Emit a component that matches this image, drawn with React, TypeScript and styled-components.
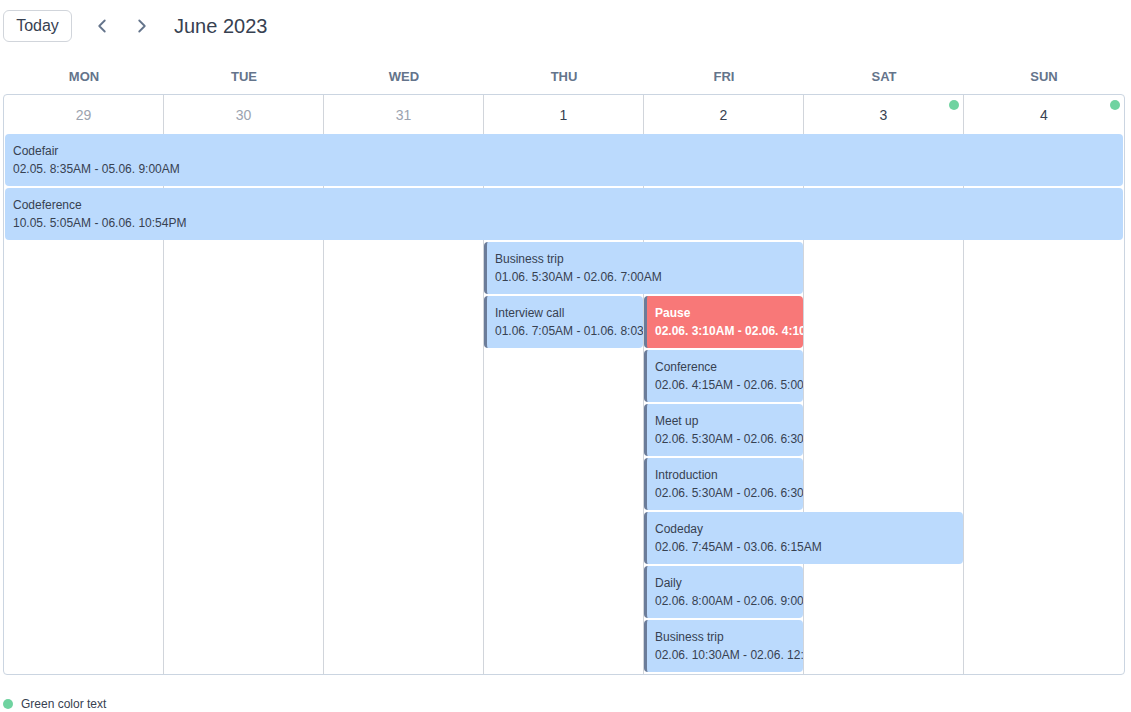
import React from 'react';
import styled, { createGlobalStyle } from 'styled-components';
import { ChevronLeft, ChevronRight } from 'lucide-react';

type Day = { label: string; num: number; muted?: boolean; dot?: boolean };

type CalEvent = {
  title: string;
  time: string;
  row: number;
  start: number;
  span: number;
  accent?: boolean;
  danger?: boolean;
};

const days: Day[] = [
  { label: 'MON', num: 29, muted: true },
  { label: 'TUE', num: 30, muted: true },
  { label: 'WED', num: 31, muted: true },
  { label: 'THU', num: 1 },
  { label: 'FRI', num: 2 },
  { label: 'SAT', num: 3, dot: true },
  { label: 'SUN', num: 4, dot: true },
];

const events: CalEvent[] = [
  { title: 'Codefair', time: '02.05. 8:35AM - 05.06. 9:00AM', row: 2, start: 1, span: 7 },
  { title: 'Codeference', time: '10.05. 5:05AM - 06.06. 10:54PM', row: 3, start: 1, span: 7 },
  { title: 'Business trip', time: '01.06. 5:30AM - 02.06. 7:00AM', row: 4, start: 4, span: 2, accent: true },
  { title: 'Interview call', time: '01.06. 7:05AM - 01.06. 8:03AM', row: 5, start: 4, span: 1, accent: true },
  { title: 'Pause', time: '02.06. 3:10AM - 02.06. 4:10AM', row: 5, start: 5, span: 1, accent: true, danger: true },
  { title: 'Conference', time: '02.06. 4:15AM - 02.06. 5:00AM', row: 6, start: 5, span: 1, accent: true },
  { title: 'Meet up', time: '02.06. 5:30AM - 02.06. 6:30AM', row: 7, start: 5, span: 1, accent: true },
  { title: 'Introduction', time: '02.06. 5:30AM - 02.06. 6:30AM', row: 8, start: 5, span: 1, accent: true },
  { title: 'Codeday', time: '02.06. 7:45AM - 03.06. 6:15AM', row: 9, start: 5, span: 2, accent: true },
  { title: 'Daily', time: '02.06. 8:00AM - 02.06. 9:00AM', row: 10, start: 5, span: 1, accent: true },
  { title: 'Business trip', time: '02.06. 10:30AM - 02.06. 12:00PM', row: 11, start: 5, span: 1, accent: true },
];

const App: React.FC = () => {
  return (
    <Page>
      <GlobalStyle />
      <Toolbar>
        <TodayButton>Today</TodayButton>
        <NavButton aria-label="Previous">
          <ChevronLeft size={22} strokeWidth={2} />
        </NavButton>
        <NavButton aria-label="Next">
          <ChevronRight size={22} strokeWidth={2} />
        </NavButton>
        <Title>June 2023</Title>
      </Toolbar>

      <WeekdayRow>
        {days.map((d) => (
          <Weekday key={d.label}>{d.label}</Weekday>
        ))}
      </WeekdayRow>

      <MonthGrid>
        {days.map((d, i) => (
          <DayColumn key={d.label} $col={i + 1} $last={i === days.length - 1}>
            <DayNumber $muted={d.muted}>{d.num}</DayNumber>
            {d.dot && <Dot />}
          </DayColumn>
        ))}
        {events.map((e, i) => (
          <EventBox
            key={i}
            $row={e.row}
            $start={e.start}
            $span={e.span}
            $accent={e.accent}
            $danger={e.danger}
          >
            <EventTitle>{e.title}</EventTitle>
            <EventTime>{e.time}</EventTime>
          </EventBox>
        ))}
      </MonthGrid>

      <Legend>
        <LegendDot />
        <LegendText>Green color text</LegendText>
      </Legend>
    </Page>
  );
};

const GlobalStyle = createGlobalStyle`
  body {
    margin: 0;
    background: #ffffff;
    font-family: "Liberation Sans", Arial, sans-serif;
    color: #374151;
  }
`;

const Page: any = styled.div`
  padding: 10px 7px 0 3px;
  width: 1122px;
`;

const Toolbar: any = styled.div`
  display: flex;
  align-items: center;
  height: 32px;
`;

const TodayButton: any = styled.button`
  height: 32px;
  width: 69px;
  padding: 0;
  border: 1px solid #d1d5db;
  border-radius: 6px;
  background: #ffffff;
  font-family: "Liberation Sans", Arial, sans-serif;
  font-size: 16px;
  color: #374151;
  margin-right: 15px;
`;

const NavButton: any = styled.button`
  display: flex;
  align-items: center;
  justify-content: center;
  width: 30px;
  height: 30px;
  padding: 0;
  border: none;
  background: transparent;
  color: #64748b;
  margin-right: 10px;
`;

const Title: any = styled.div`
  font-size: 20px;
  color: #374151;
  margin-left: 7px;
`;

const WeekdayRow: any = styled.div`
  display: grid;
  grid-template-columns: repeat(7, 160px);
  height: 36px;
  margin-top: 16px;
  padding-left: 1px;
`;

const Weekday: any = styled.div`
  display: flex;
  align-items: center;
  justify-content: center;
  font-size: 13px;
  font-weight: bold;
  color: #64748b;
`;

const MonthGrid: any = styled.div`
  display: grid;
  grid-template-columns: repeat(7, 160px);
  grid-template-rows: 39px repeat(10, 54px);
  border: 1px solid #cbd5e1;
  border-radius: 4px;
  width: 1120px;
  overflow: hidden;
`;

const DayColumn: any = styled.div`
  grid-column: ${(p: any) => p.$col};
  grid-row: 1 / -1;
  position: relative;
  border-right: ${(p: any) => (p.$last ? 'none' : '1px solid #d1d5db')};
`;

const DayNumber: any = styled.div`
  height: 39px;
  display: flex;
  align-items: center;
  justify-content: center;
  font-size: 14px;
  color: ${(p: any) => (p.$muted ? '#9ca3af' : '#374151')};
`;

const Dot: any = styled.span`
  position: absolute;
  top: 5px;
  right: 4px;
  width: 10px;
  height: 10px;
  border-radius: 50%;
  background: #6fd3a0;
`;

const EventBox: any = styled.div`
  grid-column: ${(p: any) => `${p.$start} / span ${p.$span}`};
  grid-row: ${(p: any) => p.$row};
  position: relative;
  z-index: 1;
  margin: 0 1px 2px ${(p: any) => (p.$accent ? '0' : '1px')};
  padding: 8px 8px 0 8px;
  border-radius: 4px;
  border-left: ${(p: any) => (p.$accent ? '3px solid #6b7c99' : 'none')};
  background: ${(p: any) => (p.$danger ? '#f87878' : '#bbdafd')};
  color: ${(p: any) => (p.$danger ? '#ffffff' : '#374151')};
  font-weight: ${(p: any) => (p.$danger ? 'bold' : 'normal')};
  overflow: hidden;
  white-space: nowrap;
  font-size: 12px;
  line-height: 18px;
`;

const EventTitle: any = styled.div``;

const EventTime: any = styled.div``;

const Legend: any = styled.div`
  display: flex;
  align-items: center;
  margin-top: 21px;
  height: 16px;
`;

const LegendDot: any = styled.span`
  width: 10px;
  height: 10px;
  border-radius: 50%;
  background: #6fd3a0;
  margin-right: 8px;
`;

const LegendText: any = styled.span`
  font-size: 12px;
  color: #374151;
`;

export default App;
